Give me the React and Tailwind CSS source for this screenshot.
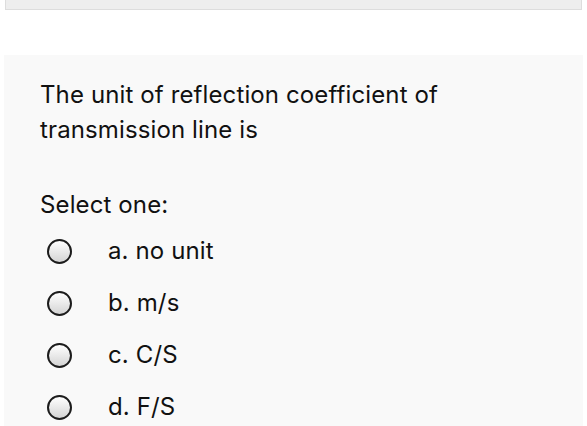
const options = ['a. no unit', 'b. m/s', 'c. C/S', 'd. F/S'];

function Radio() {
  return (
    <span className="block w-[25px] h-[25px] rounded-full border-2 border-[#1c1c1c] bg-gradient-to-b from-[#ffffff] to-[#d4d4d4]" />
  );
}

export default function App() {
  return (
    <div className="w-[587px] h-[426px] overflow-hidden bg-white text-[#111] tracking-[0.12px] font-['Inter','Liberation_Sans',sans-serif]">
      <div className="mx-[5px] h-[10px] bg-[#eeeeee] border-x border-b border-[#dddddd]" />

      <div className="mt-[45px] mx-[4px] bg-[#f9f9f9] pl-[36px] pt-[22px] pb-6">
        <p className="text-[24px] leading-[35px] w-[450px]">
          The unit of reflection coefficient of transmission line is
        </p>

        <p className="mt-[40px] text-[24px] leading-[35px]">Select one:</p>

        <div className="mt-[3px] flex flex-col">
          {options.map((label) => (
            <label key={label} className="flex items-center h-[52px]">
              <span className="w-[68px] pl-[7px]">
                <Radio />
              </span>
              <span className="text-[24px]">{label}</span>
            </label>
          ))}
        </div>
      </div>
    </div>
  );
}
